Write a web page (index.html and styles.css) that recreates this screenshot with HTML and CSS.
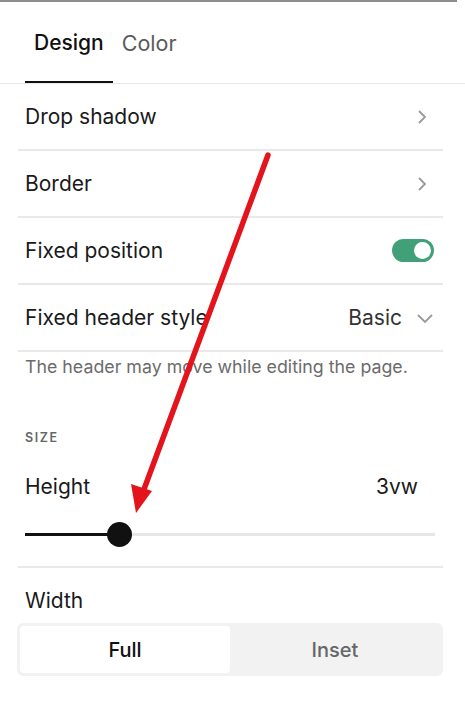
FILE: index.html
```html
<!DOCTYPE html>
<html>
<head>
<meta charset="utf-8">
<link rel="stylesheet" href="styles.css">
</head>
<body>
<div class="panel">
  <div class="topbar"></div>
  <div class="tabs">
    <div class="tab active">Design</div>
    <div class="tab">Color</div>
  </div>
  <div class="list">
    <div class="row">
      <span class="label">Drop shadow</span>
      <svg class="chev" width="12" height="16" viewBox="0 0 12 16"><path d="M3 2 L9 8 L3 14" fill="none" stroke="#9a9a9a" stroke-width="1.8"/></svg>
    </div>
    <div class="row">
      <span class="label">Border</span>
      <svg class="chev" width="12" height="16" viewBox="0 0 12 16"><path d="M3 2 L9 8 L3 14" fill="none" stroke="#9a9a9a" stroke-width="1.8"/></svg>
    </div>
    <div class="row">
      <span class="label">Fixed position</span>
      <span class="toggle"><span class="knob"></span></span>
    </div>
    <div class="row">
      <span class="label">Fixed header style</span>
      <span class="select">Basic
        <svg class="down" width="18" height="12" viewBox="0 0 18 12"><path d="M2 3 L9 10 L16 3" fill="none" stroke="#9a9a9a" stroke-width="1.8"/></svg>
      </span>
    </div>
    <p class="help">The header may move while editing the page.</p>
    <div class="section-title">SIZE</div>
    <div class="field">
      <div class="field-head"><span class="label">Height</span><span class="value">3vw</span></div>
      <div class="slider">
        <div class="fill" style="width: 94px"></div>
        <div class="thumb"></div>
      </div>
    </div>
    <div class="field width">
      <div class="field-head"><span class="label">Width</span></div>
      <div class="segmented">
        <div class="seg on">Full</div>
        <div class="seg">Inset</div>
      </div>
    </div>
  </div>
  <svg class="annot" width="465" height="714" viewBox="0 0 465 714">
    <line x1="268" y1="155" x2="143" y2="492" stroke="#e3141b" stroke-width="5.5" stroke-linecap="round"/>
    <polygon points="136,513 131,484 152,491" fill="#e3141b"/>
  </svg>
</div>
</body>
</html>
```
FILE: styles.css
```css
html, body {
  margin: 0;
  padding: 0;
  background: #fff;
}
body {
  font-family: Inter, "Noto Sans", "Liberation Sans", sans-serif;
  color: #1a1a1a;
  width: 465px;
  height: 714px;
  overflow: hidden;
}
.panel {
  position: relative;
  height: 714px;
}
.topbar {
  height: 2px;
  background: #8d8d8d;
  margin-right: 8px;
}
.tabs {
  display: flex;
  padding-left: 25px;
  height: 81px;
  border-bottom: 1px solid #e8e8e8;
}
.tab {
  padding: 0 9px;
  display: flex;
  align-items: center;
  font-size: 21.5px;
  color: #5a5a5a;
  height: 81px;
  box-sizing: border-box;
  padding-top: 2px;
  border-bottom: 2px solid transparent;
}
.tab.active {
  color: #111;
  font-weight: 500;
  font-size: 21px;
  border-bottom-color: #111;
}
.list {
  margin: 0 22px 0 18px;
}
.row {
  display: flex;
  align-items: center;
  justify-content: space-between;
  height: 65px;
  border-bottom: 2px solid #e9e9e9;
  padding: 0 9px 0 7px;
}
.label {
  font-size: 21px;
  color: #1a1a1a;
}
.chev {
  margin-right: 6px;
}
.toggle {
  width: 42px;
  height: 23px;
  border-radius: 12px;
  background: #41a077;
  display: flex;
  align-items: center;
  justify-content: flex-end;
  padding-right: 3px;
  box-sizing: border-box;
}
.knob {
  width: 17px;
  height: 17px;
  border-radius: 50%;
  background: #fff;
}
.select {
  display: flex;
  align-items: center;
  gap: 14px;
  font-size: 21px;
  color: #333;
}
.help {
  margin: 4px 0 0 7px;
  font-size: 17.8px;
  color: #6b6b6b;
  line-height: 22px;
}
.section-title {
  margin: 52px 0 0 7px;
  font-size: 12.5px;
  font-weight: 600;
  letter-spacing: 1.6px;
  color: #666;
}
.field {
  padding: 0 8px 0 7px;
}
.field-head {
  display: flex;
  justify-content: space-between;
  align-items: center;
  margin-top: 29px;
}
.value {
  font-size: 21px;
  color: #1a1a1a;
  margin-right: 17px;
}
.slider {
  position: relative;
  height: 3px;
  background: #e6e6e6;
  margin-top: 34px;
  margin-bottom: 30px;
}
.fill {
  height: 3px;
  background: #111;
}
.thumb {
  position: absolute;
  left: 82px;
  top: -11px;
  width: 25px;
  height: 25px;
  border-radius: 50%;
  background: #111;
}
.field.width {
  border-top: 2px solid #e9e9e9;
  padding: 0;
}
.field.width .field-head {
  margin: 20px 0 0 7px;
}
.segmented {
  display: flex;
  margin: 10px 0 0 -1px;
  background: #f2f2f2;
  border-radius: 6px;
  padding: 3px;
  height: 47px;
}
.seg {
  flex: 1;
  display: flex;
  align-items: center;
  justify-content: center;
  font-size: 20px;
  color: #666;
  font-weight: 500;
  border-radius: 4px;
}
.seg.on {
  background: #fff;
  color: #111;
}
.annot {
  position: absolute;
  left: 0;
  top: 0;
  pointer-events: none;
}
```
